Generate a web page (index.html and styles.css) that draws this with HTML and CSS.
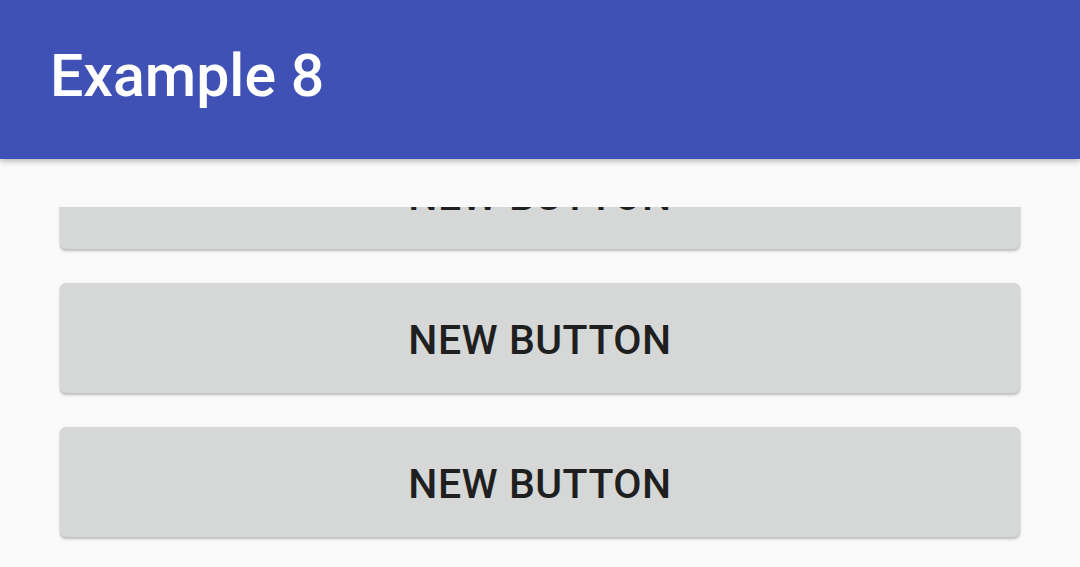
FILE: index.html
```html
<!DOCTYPE html>
<html lang="en">
  <head>
    <meta charset="UTF-8" />
    <meta name="viewport" content="width=device-width, initial-scale=1.0" />
    <title>Example 8</title>
    <link rel="stylesheet" href="styles.css">
  </head>
  <body>
    <header class="app-bar">
      <h1 class="app-title">Example 8</h1>
    </header>
    <main class="content">
      <div class="scroll-view">
        <div class="button-list">
          <button class="btn">New Button</button>
          <button class="btn">New Button</button>
          <button class="btn">New Button</button>
        </div>
      </div>
    </main>
  </body>
</html>
```
FILE: styles.css
```css
html,
body {
  margin: 0;
  height: 100%;
  overflow: hidden;
  background: #fafafa;
  font-family: Roboto, "Liberation Sans", sans-serif;
}

.app-bar {
  position: relative;
  z-index: 2;
  box-sizing: border-box;
  height: 159px;
  padding: 46px 0 0 50px;
  background: #3f51b5;
  box-shadow: 0 2px 6px rgba(0, 0, 0, 0.3);
}

.app-title {
  margin: 0;
  font-size: 59px;
  font-weight: 500;
  line-height: 59px;
  color: #fff;
}

.content {
  padding-top: 48px;
}

.scroll-view {
  height: 360px;
  overflow: hidden;
}

.button-list {
  display: flex;
  flex-direction: column;
  gap: 34px;
  margin-top: -68px;
  padding: 0 60px;
}

.btn {
  box-sizing: border-box;
  height: 110px;
  padding: 4px 0 0;
  border: 0;
  border-radius: 6px;
  background: #d6d7d7;
  box-shadow: 0 2px 3px rgba(0, 0, 0, 0.26), 0 0 1px rgba(0, 0, 0, 0.12);
  font-family: Roboto, "Liberation Sans", sans-serif;
  font-size: 41px;
  font-weight: 500;
  line-height: 106px;
  letter-spacing: 0.5px;
  text-transform: uppercase;
  color: #1f1f1f;
}
```
